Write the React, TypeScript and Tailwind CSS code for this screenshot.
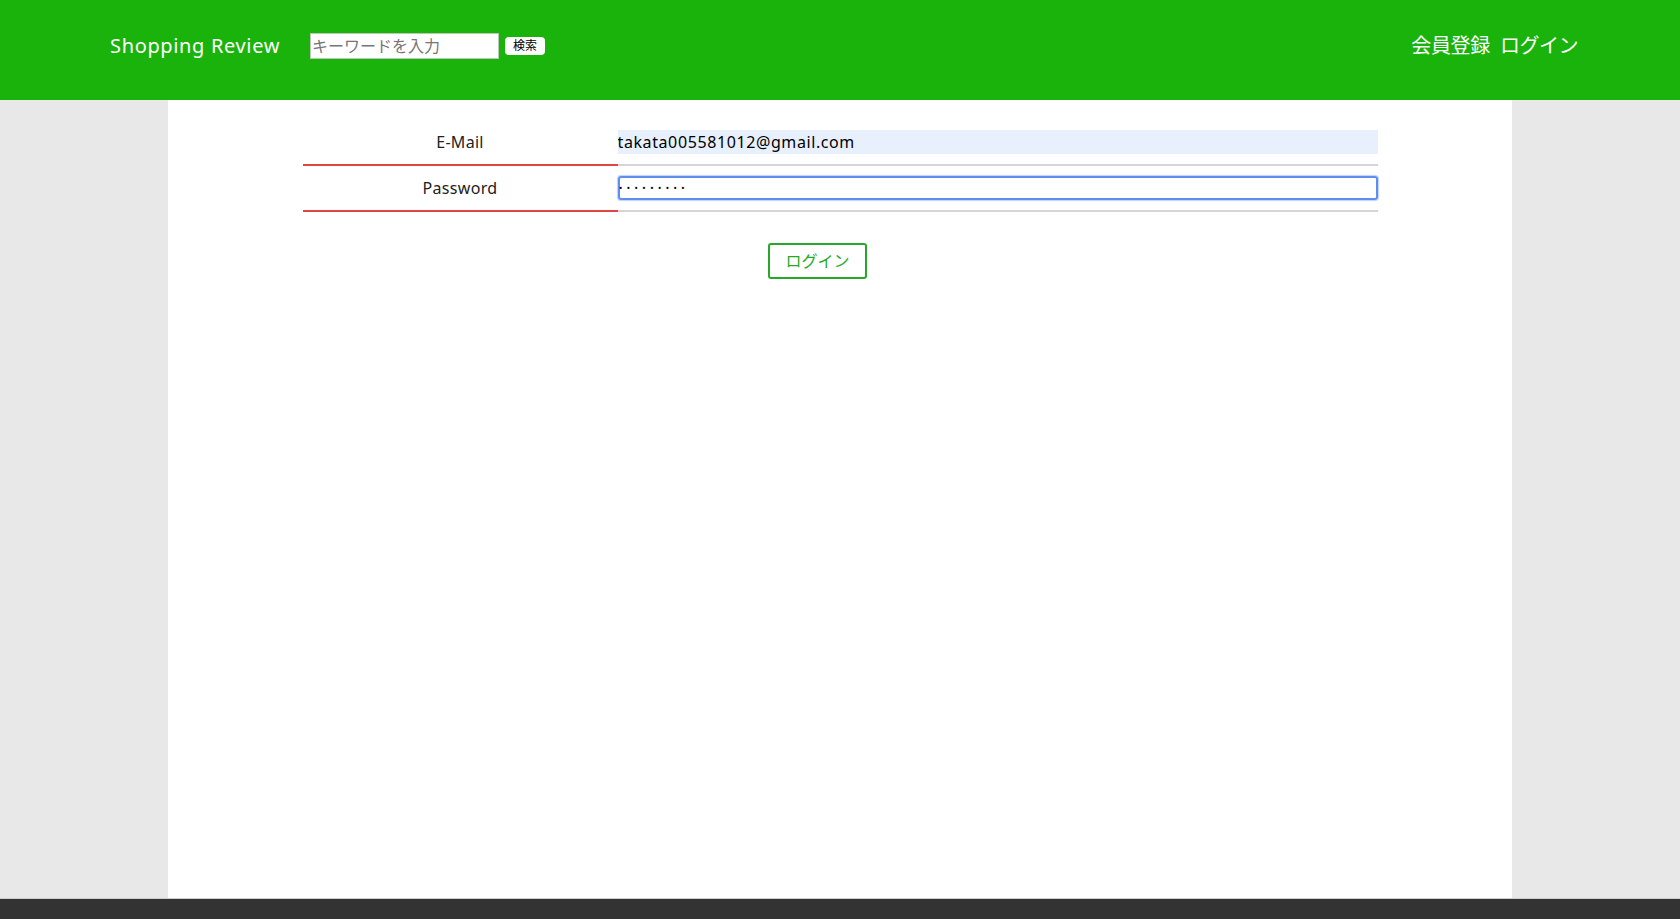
import { useState } from 'react';

export default function App() {
  const [email, setEmail] = useState('takata005581012@gmail.com');

  return (
    <div className="min-h-screen bg-[#e8e8e8] flex flex-col font-['Noto_Sans','Noto_Sans_CJK_JP',sans-serif]">
      {/* Header */}
      <header className="h-[100px] bg-[#19b30b] flex items-center justify-between pl-[110px] pr-[102px] pb-[9px]">
        <div className="flex items-center">
          <span className="text-[20px] text-white tracking-[0.65px]">Shopping Review</span>
          <input
            type="text"
            placeholder="キーワードを入力"
            className="ml-[30px] w-[189px] h-[26px] bg-white border border-[#b9c9b6] px-[1px] text-[16px] text-black placeholder:text-[#767676] outline-none"
          />
          <button className="ml-[6px] h-[18px] px-[8px] bg-white rounded-[4px] text-[12px] leading-[18px] text-black">
            検索
          </button>
        </div>
        <nav className="flex items-center gap-[10px] text-[20px] text-white">
          <a className="tracking-[-0.3px]">会員登録</a>
          <a className="tracking-[-0.5px]">ログイン</a>
        </nav>
      </header>

      {/* Main */}
      <main className="flex-1 w-[1344px] mx-auto bg-white pt-[20px] h-[798px]">
        <div className="w-[1075px] mx-auto">
          <div className="flex">
            <div className="w-[315px] flex items-center justify-center text-[16px] text-[#222] tracking-[0.3px] border-b-2 border-[#e44343]">
              E-Mail
            </div>
            <div className="flex-1 py-[10px] border-b-2 border-[#d5d5d5]">
              <input
                type="email"
                value={email}
                onChange={(e) => setEmail(e.target.value)}
                className="w-full h-[24px] bg-[#e8f0fe] text-[16px] tracking-[0.6px] text-black outline-none"
              />
            </div>
          </div>
          <div className="flex">
            <div className="w-[315px] flex items-center justify-center text-[16px] text-[#222] tracking-[0.3px] border-b-2 border-[#e44343]">
              Password
            </div>
            <div className="flex-1 py-[10px] border-b-2 border-[#d5d5d5]">
              <div className="w-full h-[24px] rounded-[3px] border-2 border-[#5f8ef0] shadow-[0_0_1px_1px_rgba(95,142,240,0.4)] flex items-center">
                <span className="text-[16px] leading-none text-black tracking-[3.5px] -ml-[1px]">·········</span>
              </div>
            </div>
          </div>
        </div>
        <div className="mt-[31px] pl-[600px]">
          <button className="w-[99px] h-[36px] border-2 border-[#28a82a] rounded-[3px] text-[16px] text-[#28a82a] bg-white">
            ログイン
          </button>
        </div>
      </main>

      {/* Footer */}
      <footer className="h-[21px] bg-[#333333] border-t border-[#cfcfcf]" />
    </div>
  );
}
